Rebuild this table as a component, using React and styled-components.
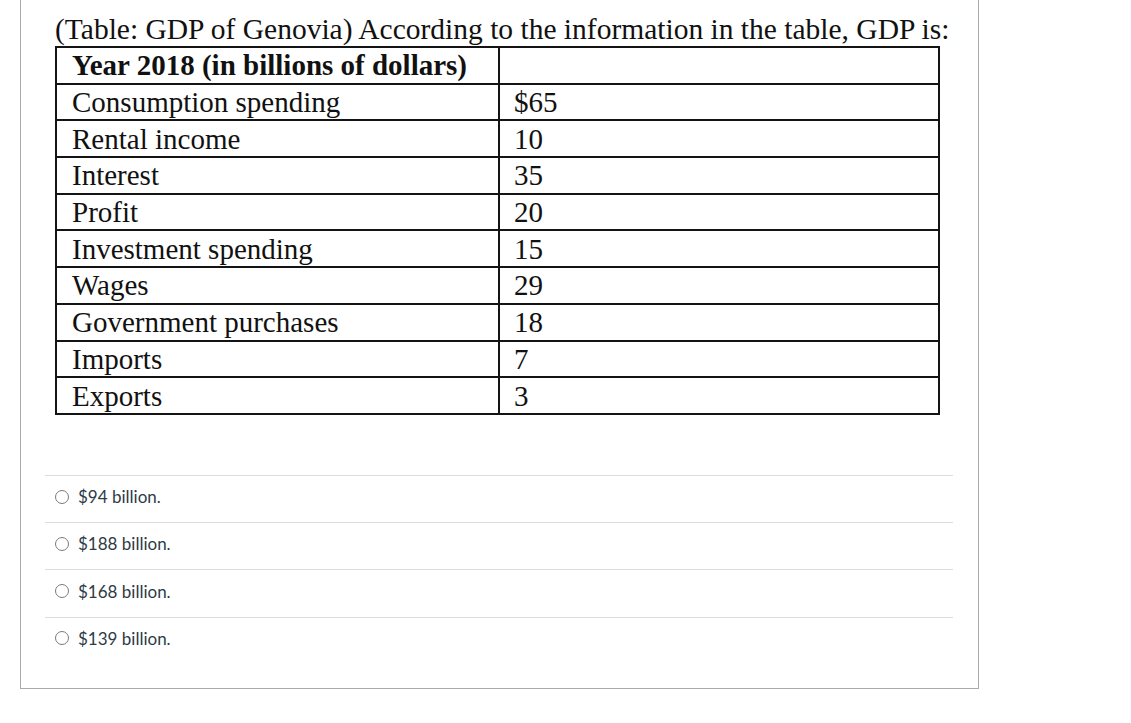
import React from 'react'
import styled, { createGlobalStyle } from 'styled-components'

const Global = createGlobalStyle`
  body {
    margin: 0;
    background: #fff;
  }
`

const Panel = styled.div`
  box-sizing: border-box;
  width: 959px;
  margin-left: 20px;
  border: 1px solid #aaa;
  border-top: none;
  padding: 13px 25px 24px 24px;
`

const Title = styled.div`
  font-family: "Liberation Serif", "Times New Roman", serif;
  font-size: 29.5px;
  line-height: 33px;
  color: #111;
  padding-left: 10px;
  white-space: nowrap;
`

const Table = styled.table`
  margin-left: 10px;
  width: 885px;
  border-collapse: collapse;
  font-family: "Liberation Serif", "Times New Roman", serif;
  color: #111;
`

const Cell = styled.td`
  border: 2px solid #141414;
  height: 34.7px;
  padding: 0 0 0 ${p => p.pad || 15}px;
  font-size: ${p => p.size || 29}px;
  font-weight: ${p => (p.bold ? 700 : 400)};
  line-height: 30px;
  vertical-align: middle;
  width: ${p => p.w || 'auto'};
  white-space: nowrap;
`

const Options = styled.div`
  margin-top: 60px;
`

const Option = styled.label`
  box-sizing: border-box;
  display: flex;
  align-items: center;
  gap: 9px;
  height: 47.3px;
  padding: 0 0 5px 10px;
  border-top: 1px solid #ddd;
  font-family: Lato, "Open Sans", sans-serif;
  font-size: 17px;
  color: #2d3b45;
`

const Radio = styled.span`
  box-sizing: border-box;
  width: 14px;
  height: 14px;
  border-radius: 50%;
  border: 1.5px solid #7a7a7a;
  background: #fff;
  flex: none;
`

const rows = [
  ['Consumption spending', '$65'],
  ['Rental income', '10'],
  ['Interest', '35'],
  ['Profit', '20'],
  ['Investment spending', '15'],
  ['Wages', '29'],
  ['Government purchases', '18'],
  ['Imports', '7'],
  ['Exports', '3'],
]

const answers = ['$94 billion.', '$188 billion.', '$168 billion.', '$139 billion.']

export default function App() {
  return (
    <>
      <Global />
      <Panel>
        <Title>(Table: GDP of Genovia) According to the information in the table, GDP is:</Title>
        <Table>
          <tbody>
            <tr>
              <Cell bold w="426px">Year 2018 (in billions of dollars)</Cell>
              <Cell></Cell>
            </tr>
            {rows.map(([label, value]) => (
              <tr key={label}>
                <Cell>{label}</Cell>
                <Cell pad={14}>{value}</Cell>
              </tr>
            ))}
          </tbody>
        </Table>
        <Options>
          {answers.map(a => (
            <Option key={a}>
              <Radio />
              {a}
            </Option>
          ))}
        </Options>
      </Panel>
    </>
  )
}
